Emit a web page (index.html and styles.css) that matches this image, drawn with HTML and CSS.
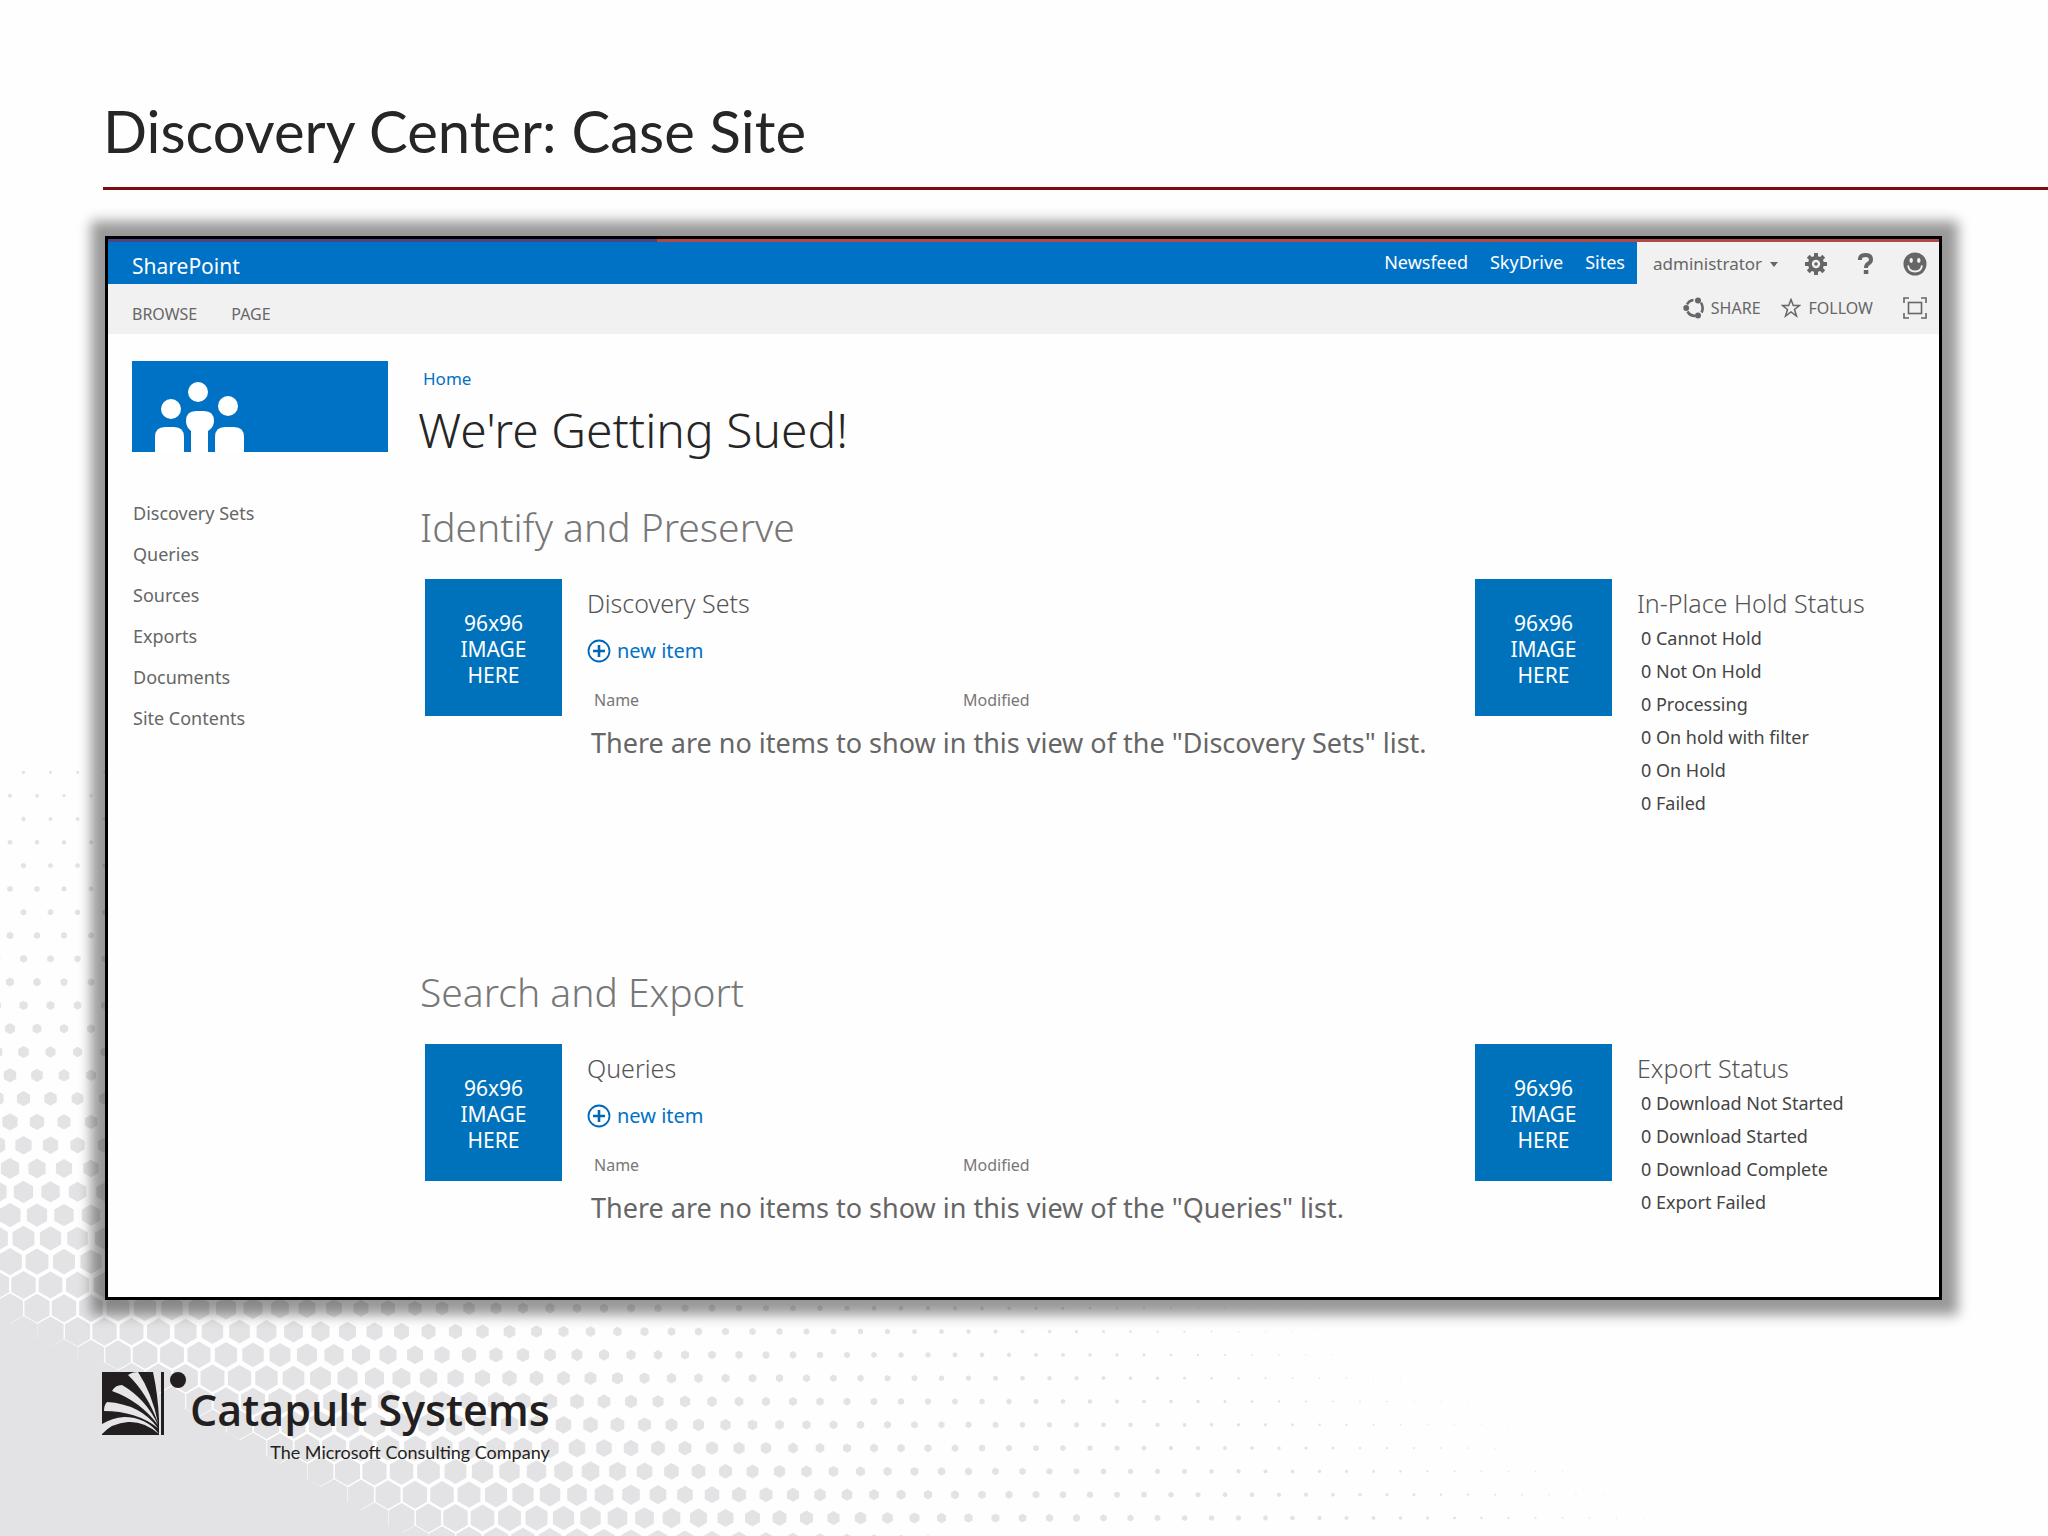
FILE: index.html
```html
<!DOCTYPE html>
<html lang="en">
<head>
<meta charset="utf-8">
<title>Discovery Center: Case Site</title>
<link rel="stylesheet" href="styles.css">
</head>
<body>
<svg class="backdrop" aria-hidden="true"><path class="backdrop-dots" id="dots"/></svg>

<header class="slide-header">
  <h1 class="slide-title">Discovery Center: Case Site</h1>
</header>

<main class="window">
  <div class="window-edge"></div>
  <div class="suite">
    <div class="suite-bar">
      <a class="suite-brand" href="#">SharePoint</a>
      <nav class="suite-links">
        <a href="#">Newsfeed</a>
        <a href="#">SkyDrive</a>
        <a href="#">Sites</a>
      </nav>
    </div>
    <div class="suite-user">
      <button class="user-menu" type="button">administrator <span class="caret"></span></button>
      <button class="icon-button" type="button" aria-label="Settings">
        <svg width="24" height="24" viewBox="0 0 24 24"><g fill="#666"><circle cx="12" cy="12" r="8"/><rect x="10" y="1" width="4" height="22"/><rect x="1" y="10" width="22" height="4"/><g transform="rotate(45 12 12)"><rect x="10" y="1" width="4" height="22"/><rect x="1" y="10" width="22" height="4"/></g></g><circle cx="12" cy="12" r="4.200" fill="#f1f1f2"/><circle cx="12" cy="12" r="1.800" fill="#666"/></svg>
      </button>
      <button class="icon-button" type="button" aria-label="Help">
        <svg width="24" height="24" viewBox="0 0 24 24"><path d="M7 8V6.500Q7.500 3 12.500 3Q18 3 18 7.500Q18 10 15.500 11.500Q13 12.800 13 16" fill="none" stroke="#666" stroke-width="4"/><rect x="10.800" y="18" width="4.500" height="4" fill="#666"/></svg>
      </button>
      <button class="icon-button" type="button" aria-label="Feedback">
        <svg width="24" height="24" viewBox="0 0 24 24"><circle cx="12" cy="12" r="11.500" fill="#666"/><ellipse cx="8.200" cy="8.500" rx="1.700" ry="2.400" fill="#f1f1f2"/><ellipse cx="15.800" cy="8.500" rx="1.700" ry="2.400" fill="#f1f1f2"/><path d="M5 13.500Q6 19.500 12 19.500Q18 19.500 19 13.500" fill="none" stroke="#f1f1f2" stroke-width="1.800"/></svg>
      </button>
    </div>
  </div>

  <div class="ribbon">
    <nav class="ribbon-tabs">
      <a href="#">BROWSE</a>
      <a href="#">PAGE</a>
    </nav>
    <div class="ribbon-actions">
      <button class="action" type="button">
        <svg width="22" height="22" viewBox="0 0 22 22"><g fill="none" stroke="#666" stroke-width="2.600"><path d="M4 7.500Q6 3.500 10.500 3"/><path d="M18 5.500Q21 11 18.500 15.500"/><path d="M12.500 19Q7 19 4.500 14.500"/></g><circle cx="3.200" cy="11" r="2.900" fill="#666"/><circle cx="15" cy="3.500" r="3" fill="#666"/><circle cx="15" cy="18.500" r="3" fill="#666"/></svg>
        SHARE
      </button>
      <button class="action action-follow" type="button">
        <svg width="20" height="20" viewBox="0 0 20 20"><path d="M10 1.500L12.300 7.500H18.500L13.500 11.500L15.500 18L10 14L4.500 18L6.500 11.500L1.500 7.500H7.700Z" fill="none" stroke="#666" stroke-width="1.500"/></svg>
        FOLLOW
      </button>
      <button class="icon-button" type="button" aria-label="Focus on content">
        <svg width="24" height="22" viewBox="0 0 24 22"><path d="M1 6V1H6M18 1H23V6M23 16V21H18M6 21H1V16" fill="none" stroke="#666" stroke-width="1.600"/><rect x="5.500" y="5.500" width="13" height="11" fill="none" stroke="#666" stroke-width="1.600"/></svg>
      </button>
    </div>
  </div>

  <div class="site">
    <aside class="site-side">
      <a class="site-logo" href="#" aria-label="Site home">
        <svg width="256" height="91" viewBox="0 0 256 91"><g fill="#fff"><circle cx="39" cy="48" r="10"/><circle cx="66" cy="31" r="10"/><circle cx="96" cy="45" r="10"/><path d="M23 91V76Q23 66 33 66H42Q52 66 52 76V91Z"/><path d="M83 91V76Q83 66 93 66H102Q112 66 112 76V91Z"/><path d="M59 91V70Q54 66 54 60Q54 50 64 50H72Q82 50 82 60Q82 66 76 70V91Z"/></g></svg>
      </a>
      <nav class="site-nav">
        <a href="#">Discovery Sets</a>
        <a href="#">Queries</a>
        <a href="#">Sources</a>
        <a href="#">Exports</a>
        <a href="#">Documents</a>
        <a href="#">Site Contents</a>
      </nav>
    </aside>

    <div class="site-main">
      <a class="crumb" href="#">Home</a>
      <h2 class="site-title">We're Getting Sued!</h2>

      <section class="zone">
        <h3 class="zone-title">Identify and Preserve</h3>
        <div class="zone-body">
          <div class="part">
            <div class="tile">96x96<br>IMAGE<br>HERE</div>
            <div class="part-body">
              <h4 class="part-title">Discovery Sets</h4>
              <a class="new-item" href="#"><svg width="24" height="24" viewBox="0 0 24 24"><circle cx="12" cy="12" r="10.500" fill="none" stroke="#0067b8" stroke-width="1.800"/><path d="M12 6V18M6 12H18" stroke="#0067b8" stroke-width="2.600"/></svg>new item</a>
              <table class="list">
                <thead><tr><th class="col-name">Name</th><th>Modified</th></tr></thead>
                <tbody><tr><td colspan="2">There are no items to show in this view of the "Discovery Sets" list.</td></tr></tbody>
              </table>
            </div>
          </div>
          <div class="part">
            <div class="tile">96x96<br>IMAGE<br>HERE</div>
            <div class="part-body">
              <h4 class="part-title">In-Place Hold Status</h4>
              <ul class="status">
                <li>0 Cannot Hold</li>
                <li>0 Not On Hold</li>
                <li>0 Processing</li>
                <li>0 On hold with filter</li>
                <li>0 On Hold</li>
                <li>0 Failed</li>
              </ul>
            </div>
          </div>
        </div>
      </section>

      <section class="zone">
        <h3 class="zone-title">Search and Export</h3>
        <div class="zone-body">
          <div class="part">
            <div class="tile">96x96<br>IMAGE<br>HERE</div>
            <div class="part-body">
              <h4 class="part-title">Queries</h4>
              <a class="new-item" href="#"><svg width="24" height="24" viewBox="0 0 24 24"><circle cx="12" cy="12" r="10.500" fill="none" stroke="#0067b8" stroke-width="1.800"/><path d="M12 6V18M6 12H18" stroke="#0067b8" stroke-width="2.600"/></svg>new item</a>
              <table class="list">
                <thead><tr><th class="col-name">Name</th><th>Modified</th></tr></thead>
                <tbody><tr><td colspan="2">There are no items to show in this view of the "Queries" list.</td></tr></tbody>
              </table>
            </div>
          </div>
          <div class="part">
            <div class="tile">96x96<br>IMAGE<br>HERE</div>
            <div class="part-body">
              <h4 class="part-title">Export Status</h4>
              <ul class="status">
                <li>0 Download Not Started</li>
                <li>0 Download Started</li>
                <li>0 Download Complete</li>
                <li>0 Export Failed</li>
              </ul>
            </div>
          </div>
        </div>
      </section>
    </div>
  </div>
</main>

<footer class="slide-footer">
  <svg width="86" height="66" viewBox="0 0 86 66"><rect x="0" y="1" width="57" height="63" fill="#231f20"/><rect x="59" y="1" width="3" height="63" fill="#231f20"/><circle cx="76" cy="9" r="8" fill="#231f20"/><g fill="#e6e5e7"><path d="M51 1H57V48Q56 24 51 1Z"/><path d="M26 4Q30 1 36 1Q50 22 56 52Q45 22 26 4Z"/><path d="M10 20Q13 14 20 14Q44 28 56 54Q38 30 10 20Z"/><path d="M2 40Q2 34 5 31Q38 33 56 57Q34 40 2 40Z"/><path d="M0 53Q10 47 22 46Q44 46 57 63Q42 50 26 51Q10 52 0 63Z"/></g></svg>
  <div class="company">
    <p class="company-name">Catapult Systems</p>
    <p class="company-tag">The Microsoft Consulting Company</p>
  </div>
</footer>
<script src="backdrop.js"></script>
</body>
</html>
```
FILE: styles.css
```css
* { box-sizing: border-box; }

body {
  margin: 0;
  min-height: 100vh;
  position: relative;
  background: #fefefe;
  color: #444;
  font-family: "Noto Sans", "Open Sans", sans-serif;
  font-size: 18px;
  line-height: 24px;
}

h1, h2, h3, h4, p, ul { margin: 0; padding: 0; font-weight: 400; }
a { color: inherit; text-decoration: none; }
svg { display: block; flex: none; }
button {
  display: flex;
  align-items: center;
  padding: 0;
  border: 0;
  background: none;
  color: #666;
  font: inherit;
}

.backdrop {
  position: absolute;
  inset: 0;
  width: 100%;
  height: 100%;
  z-index: -1;
}
.backdrop-dots { fill: #e3e2e4; }

.slide-header {
  margin-left: 103px;
  padding: 92px 0 17px;
  border-bottom: 3px solid #7c0d12;
}
.slide-title {
  color: #262626;
  font-family: Lato, "Open Sans", sans-serif;
  font-size: 58px;
  line-height: 78px;
}

.window {
  margin: 46px 106px 0 105px;
  border: 3px solid #000;
  background: #fefefe;
  box-shadow: 1px 0 12px 15px rgba(0, 0, 0, 0.4);
}
.window-edge {
  height: 3px;
  background: linear-gradient(to right, #4a4580 30%, #b04a4a 30%);
}

.suite { display: flex; height: 42px; background: #f1f1f2; }
.suite-bar {
  flex: 1;
  display: flex;
  justify-content: space-between;
  padding: 0 12px 0 24px;
  background: #0072c6;
  color: #fff;
}
.suite-brand { font-size: 21px; line-height: 48px; }
.suite-links { display: flex; gap: 22px; line-height: 40px; }
.suite-user { display: flex; align-items: center; padding: 2px 12px 0 16px; width: 302px; justify-content: space-between; }
.user-menu { gap: 8px; font-size: 17px; }
.caret {
  border: 4px solid transparent;
  border-top: 5px solid #666;
  border-bottom: 0;
}

.ribbon {
  display: flex;
  justify-content: space-between;
  height: 50px;
  padding: 0 12px 0 24px;
  background: #f1f1f2;
  color: #666;
  font-size: 16px;
}
.ribbon-tabs { display: flex; gap: 34px; line-height: 60px; }
.ribbon-actions { display: flex; align-items: center; height: 48px; }
.action { gap: 6px; font-size: 16px; }
.action-follow { gap: 8px; margin: 0 30px 0 20px; }

.site { display: flex; gap: 30px; padding: 27px 24px 0; }
.site-side { width: 256px; flex: none; }
.site-logo { display: block; background: #0072c6; }
.site-nav {
  display: flex;
  flex-direction: column;
  padding: 41px 0 0 1px;
  color: #666;
  line-height: 41px;
}

.site-main { flex: 1; min-width: 0; }
.crumb { display: block; padding: 6px 0 0 5px; color: #0072c6; font-size: 17px; }
.site-title {
  padding-top: 7px;
  color: #262626;
  font-size: 48px;
  font-weight: 300;
  line-height: 64px;
}

.zone { min-height: 465px; padding: 39px 0 0 2px; }
.zone + .zone { min-height: 370px; }
.zone-title { color: #777; font-size: 39px; font-weight: 300; line-height: 52px; }
.zone-body {
  display: grid;
  grid-template-columns: 1fr 440px;
  padding: 26px 0 0 5px;
}
.part { display: flex; gap: 25px; }
.tile {
  flex: none;
  width: 137px;
  height: 137px;
  padding-top: 31px;
  background: #0072bc;
  color: #fff;
  font-size: 21px;
  line-height: 26px;
  text-align: center;
}
.part-body { flex: 1; min-width: 0; padding-top: 7px; white-space: nowrap; }
.part-title { color: #555; font-size: 25px; font-weight: 300; line-height: 34px; }
.new-item {
  display: flex;
  align-items: center;
  gap: 6px;
  padding: 19px 0 25px;
  color: #0072c6;
  font-size: 20px;
}
.list { width: 100%; table-layout: fixed; border-collapse: collapse; }
.list th { padding: 0 0 0 7px; color: #777; font-size: 16px; font-weight: 400; text-align: left; }
.col-name { width: 369px; }
.list td { padding: 13px 0 0 4px; color: #666; font-size: 27px; line-height: 36px; }
.status { padding: 2px 0 0 4px; list-style: none; line-height: 33px; }

.slide-footer { display: flex; gap: 2px; padding: 71px 0 20px 102px; }
.company { padding-top: 15px; color: #231f20; text-align: right; }
.company-name { font-family: "Open Sans", sans-serif; font-size: 43px; font-weight: 600; line-height: 48px; }
.company-tag { font-family: Lato, sans-serif; font-size: 18px; line-height: 36px; }
```
FILE: backdrop.js
```js
// Honeycomb halftone that grows out of the bottom-left corner of the slide.
(function () {
  var path = document.getElementById("dots");
  var COL = 27, ROW = 23.3;
  var stops = [[-60, 15], [-25, 13.8], [0, 12.9], [110, 10], [200, 7], [300, 4.2], [400, 2.9], [520, 1.8], [640, 0.7], [700, 0.3]];

  function apothem(d) {
    if (d <= stops[0][0]) return stops[0][1];
    for (var i = 1; i < stops.length; i++) {
      if (d < stops[i][0]) {
        var a = stops[i - 1], b = stops[i];
        return a[1] + (b[1] - a[1]) * (d - a[0]) / (b[0] - a[0]);
      }
    }
    return 0;
  }

  function draw() {
    var w = document.body.clientWidth, h = document.body.clientHeight, out = "";
    for (var r = 0; r < 40; r++) {
      var up = 18 + (r - 1) * ROW;
      for (var x = (r % 2 ? 23.5 : 10) - COL; x < w + COL; x += COL) {
        var s = apothem(up - 236 + 0.54 * x) * 1.155;
        if (s <= 0 || up > 780) break;
        for (var k = 0; k < 6; k++) {
          var t = Math.PI / 3 * k + Math.PI / 6;
          out += (k ? "L" : "M") + (x + s * Math.cos(t)).toFixed(1) + " " + (h - up + s * Math.sin(t)).toFixed(1);
        }
        out += "Z";
      }
    }
    path.setAttribute("d", out);
  }

  draw();
  window.addEventListener("resize", draw);
})();
```
